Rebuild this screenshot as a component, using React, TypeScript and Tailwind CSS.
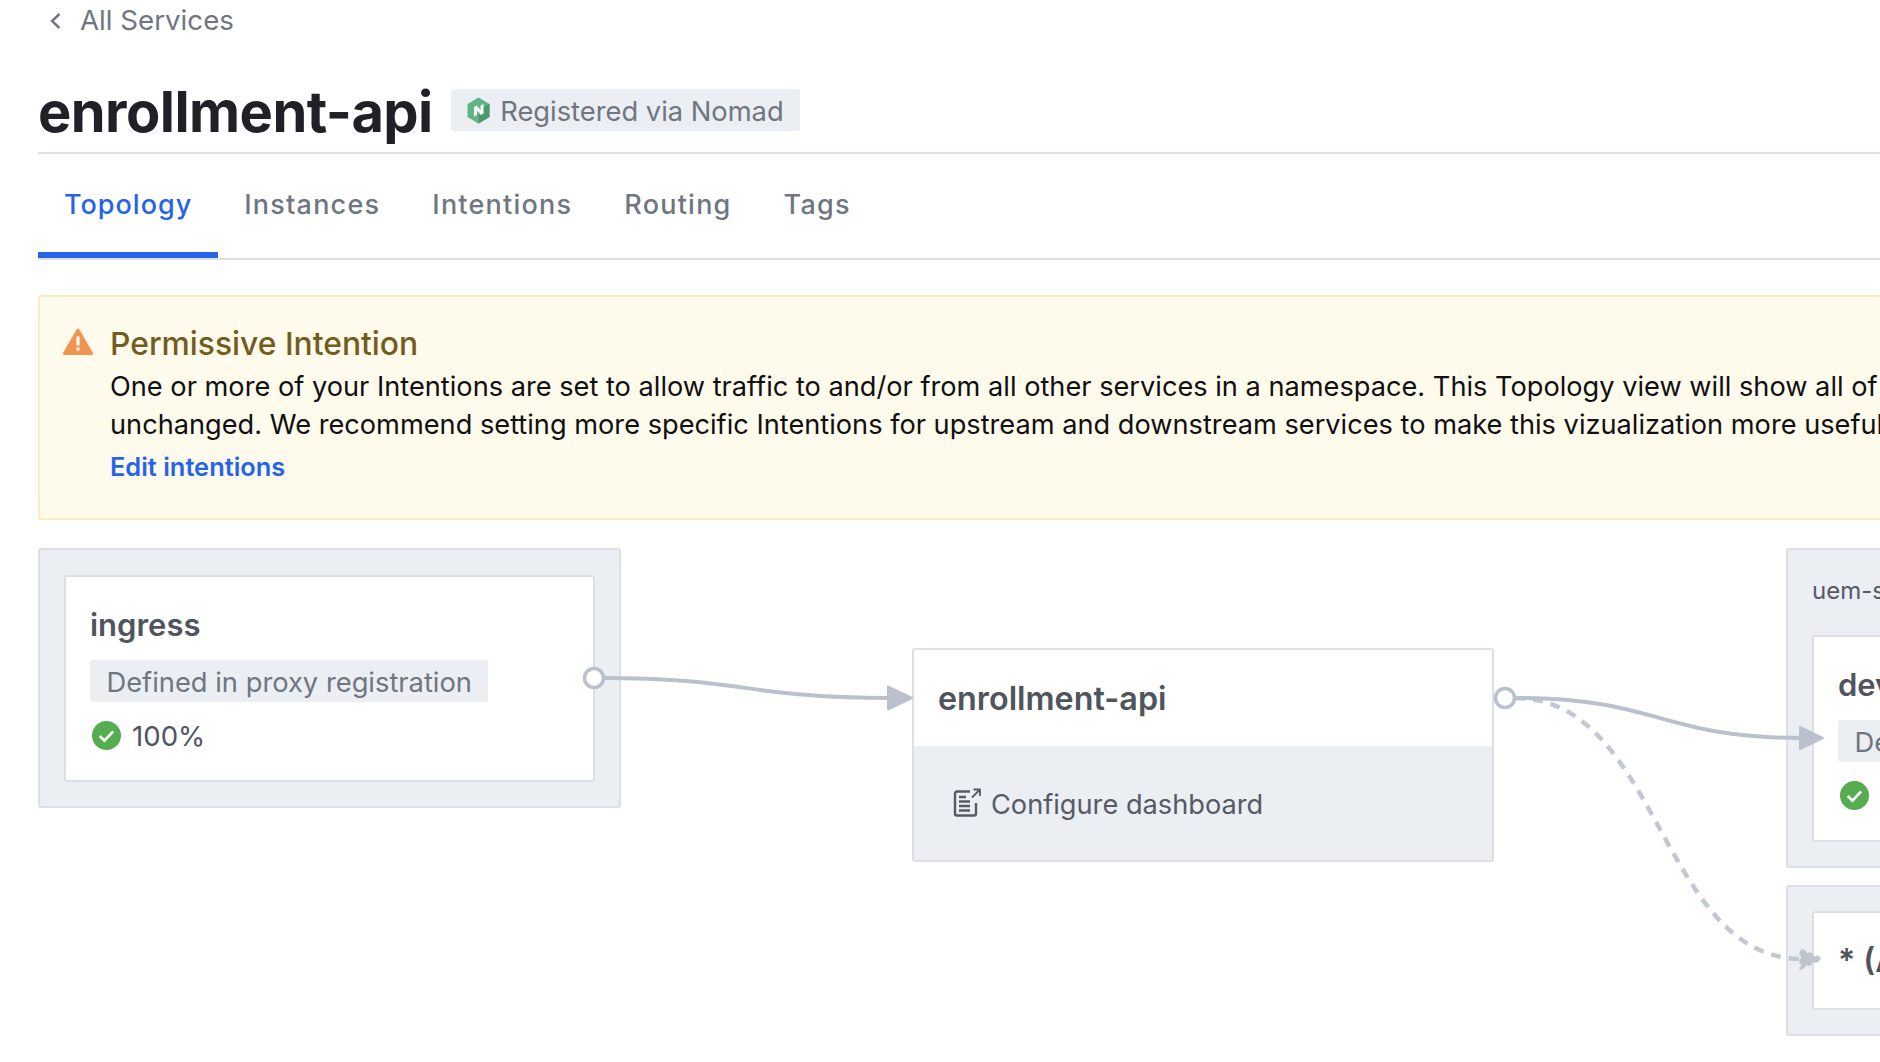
const font = "font-['Inter',sans-serif]"

function NomadLogo() {
  return (
    <svg width="23" height="27" viewBox="0 0 23 27" className="mt-[-4px] shrink-0">
      <path d="M11.5 0.5 22.5 7v13l-11 6.500L0.500 20V7z" fill="#60b584" />
      <path d="M11.5 13.500 22.5 7v13l-11 6.500z" fill="#4a9a6c" />
      <path d="M7 19.500V10l2.600-1.500 4 4.500V8.500L16.500 7v9.500l-2.600 1.500-4-4.500v4.500z" fill="#ffffff" />
    </svg>
  )
}

function WarningIcon() {
  return (
    <svg width="30" height="28" viewBox="0 0 30 28" className="shrink-0">
      <path d="M15 2 28.500 25.500H1.500z" fill="#f0954e" stroke="#f0954e" strokeWidth="3" strokeLinejoin="round" />
      <rect x="13.500" y="8.500" width="3" height="9" fill="#fff" />
      <rect x="13.500" y="19.500" width="3" height="3" fill="#fff" />
    </svg>
  )
}

function CheckIcon() {
  return (
    <svg width="29" height="29" viewBox="0 0 28 28" className="ml-[-1px] shrink-0">
      <circle cx="14" cy="14" r="14" fill="#56ad4f" />
      <path d="M7.500 14.500l4.500 4.500 8.500-9" fill="none" stroke="#fff" strokeWidth="2.600" />
    </svg>
  )
}

function DashboardIcon() {
  return (
    <svg width="28" height="29" viewBox="0 0 28 29" className="mb-[3px] shrink-0" fill="none" stroke="#555b66" strokeWidth="2.400">
      <path d="M17 3.500H4a2 2 0 0 0-2 2v20a2 2 0 0 0 2 2h17a2 2 0 0 0 2-2V15" />
      <path d="M6 9h7M6 13.500h11M6 18h11M6 22.500h11" strokeWidth="2.600" />
      <path d="M19 9.500 26.500 2M20.500 1.500h6.500v6.500" strokeWidth="1.800" />
    </svg>
  )
}

function Badge({ children }: { children: React.ReactNode }) {
  return (
    <div className="inline-flex h-[42px] items-center rounded-[3px] bg-[#ebeef2] px-[16.5px] pt-[4px] text-[27.3px] whitespace-nowrap text-[#6f7682]">
      {children}
    </div>
  )
}

function ServiceCard({ name }: { name: string }) {
  return (
    <div className="h-[207px] rounded-[3px] border-2 border-[#dce0e6] bg-white px-[24px] pt-[28px]">
      <div className="text-[31px] leading-[40px] font-semibold whitespace-nowrap text-[#4f545d]">{name}</div>
      <div className="mt-[15px]">
        <Badge>Defined in proxy registration</Badge>
      </div>
      <div className="mt-[19px] flex items-center pl-[3px] text-[27.6px] leading-[28px] text-[#4f545d]">
        <CheckIcon />
        <span className="ml-[11px]">100%</span>
      </div>
    </div>
  )
}

function Connections() {
  return (
    <svg width="1880" height="1062" className="pointer-events-none absolute top-0 left-0 z-10">
      <path d="M604 678C740 678 750 698 890 698" fill="none" stroke="#bac1cc" strokeWidth="4" />
      <path d="M888 686.500 912 698 888 709.500z" fill="#bac1cc" stroke="#bac1cc" strokeWidth="2" strokeLinejoin="round" />
      <circle cx="594" cy="678" r="9.500" fill="#fff" stroke="#bac1cc" strokeWidth="3.500" />

      <path d="M1515 698C1660 698 1660 959 1802 959" fill="none" stroke="#c2c8d2" strokeWidth="4.500" strokeDasharray="10 8" />
      <path d="M1515 698C1660 698 1660 738 1802 738" fill="none" stroke="#bac1cc" strokeWidth="4" />
      <path d="M1800 727 1823 738 1800 749z" fill="#bac1cc" stroke="#bac1cc" strokeWidth="2" strokeLinejoin="round" />
      <path d="M1801 950 1821 959 1801 968z" fill="#bfc5cf" stroke="#bfc5cf" strokeWidth="3" strokeDasharray="5 3" />
      <circle cx="1505" cy="698" r="9.500" fill="#fff" stroke="#bac1cc" strokeWidth="3.500" />
    </svg>
  )
}

export default function App() {
  return (
    <div className={`relative h-[1062px] w-[1880px] overflow-hidden bg-white pl-[38px] ${font}`}>
      <Connections />

      {/* Breadcrumb */}
      <div className="flex h-[40px] items-center pt-[1px] pl-[11px] text-[27.7px] text-[#6f7682]">
        <svg width="12" height="16" viewBox="0 0 12 16" fill="none" stroke="#6f7682" strokeWidth="2.400">
          <path d="M10.500 1 3 8l7.500 7" />
        </svg>
        <span className="ml-[19px]">All Services</span>
      </div>

      {/* Title */}
      <div className="mt-[40px] flex h-[74px] items-start gap-[18px] border-b-2 border-[#dce0e6]">
        <h1 className="mt-[14px] text-[56px] leading-[36px] font-bold tracking-[-0.55px] whitespace-nowrap text-[#1f2126]">enrollment-api</h1>
        <div className="mt-[9px]">
          <Badge>
            <NomadLogo />
            <span className="ml-[10px]">Registered via Nomad</span>
          </Badge>
        </div>
      </div>

      {/* Tabs */}
      <div className="flex h-[106px] border-b-2 border-[#dce0e6]">
        <div className="flex h-[104px] items-center border-b-[6px] border-[#2563eb] px-[26px] pt-[4px] text-[27px] font-medium tracking-[1px] text-[#2563eb]">
          Topology
        </div>
        {["Instances", "Intentions", "Routing", "Tags"].map((t) => (
          <div key={t} className="flex h-[104px] items-center px-[26px] pb-[2px] text-[27px] font-medium tracking-[1.23px] text-[#6f7682]">
            {t}
          </div>
        ))}
      </div>

      {/* Notice */}
      <div className="mt-[35px] flex h-[225px] rounded-l-[3px] border-y-2 border-l-2 border-[#fbeec4] bg-[#fefaec] pt-[28px] pl-[23px] whitespace-nowrap">
        <div className="pt-[3px]">
          <WarningIcon />
        </div>
        <div className="ml-[17px]">
          <div className="text-[31.8px] leading-[38px] font-medium text-[#735c1c]">Permissive Intention</div>
          <p className="mt-[5px] text-[27.2px] leading-[38px] text-[#101010]">
            One or more of your Intentions are set to allow traffic to and/or from all other services in a namespace. This Topology view will show all of those connections if that remains
            <br />
            unchanged. We recommend setting more specific Intentions for upstream and downstream services to make this vizualization more useful.
          </p>
          <a className="mt-[5px] block text-[25.4px] leading-[36px] font-semibold text-[#2563eb]">Edit intentions</a>
        </div>
      </div>

      {/* Topology */}
      <div className="mt-[28px] flex items-start">
        <div className="h-[260px] w-[583px] shrink-0 rounded-[3px] border-2 border-[#dce0e6] bg-[#ebeef2] px-[24px] pt-[25px]">
          <ServiceCard name="ingress" />
        </div>

        <div className="mt-[100px] ml-[291px] h-[214px] w-[582px] shrink-0 overflow-hidden rounded-[3px] border-2 border-[#dce0e6]">
          <div className="h-[96px] bg-white px-[24px] pt-[29px] text-[32.3px] leading-[40px] font-semibold text-[#4f545d]">enrollment-api</div>
          <div className="flex h-[116px] items-center bg-[#ebeef2] pl-[39px] text-[27.2px] text-[#555b66]">
            <DashboardIcon />
            <span className="ml-[10px] pt-[2px]">Configure dashboard</span>
          </div>
        </div>

        <div className="ml-[292px] flex w-[500px] shrink-0 flex-col gap-[17px]">
          <div className="h-[320px] rounded-[3px] border-2 border-[#dce0e6] bg-[#ebeef2] pt-[25px] pl-[24px]">
            <div className="text-[24px] leading-[32px] whitespace-nowrap text-[#555b66]">uem-services</div>
            <div className="mt-[28px]">
              <ServiceCard name="device-api" />
            </div>
          </div>
          <div className="h-[151px] rounded-[3px] border-2 border-[#dce0e6] bg-[#ebeef2] pt-[24px] pl-[24px]">
            <div className="flex h-[99px] items-center rounded-[3px] border-2 border-[#dce0e6] bg-white px-[24px] text-[32px] font-semibold whitespace-nowrap text-[#4f545d]">
              * (All Services)
            </div>
          </div>
        </div>
      </div>
    </div>
  )
}
